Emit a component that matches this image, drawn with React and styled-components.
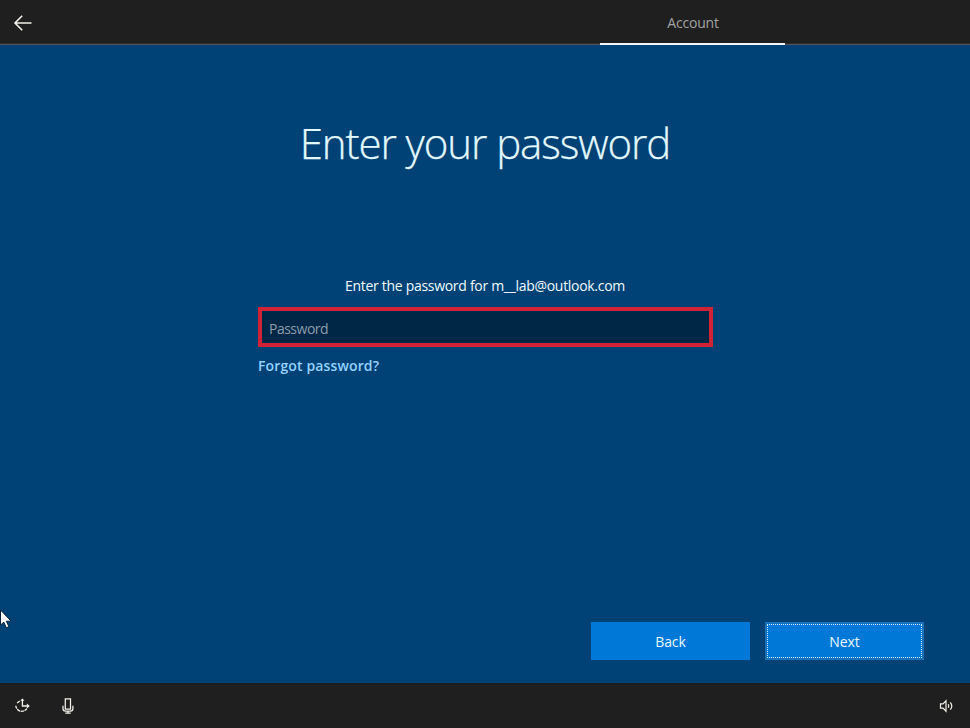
import React from "react";
import styled, { createGlobalStyle } from "styled-components";

const GlobalStyle = createGlobalStyle`
  * { box-sizing: border-box; }
  body {
    margin: 0;
    background: #004275;
    font-family: "Segoe UI", "Open Sans", "Noto Sans", sans-serif;
    overflow: hidden;
  }
`;

const Screen = styled.div`
  position: relative;
  display: flex;
  flex-direction: column;
  width: 970px;
  height: 728px;
  background: #004275;
  color: #fff;
`;

const TopBar = styled.header`
  display: flex;
  justify-content: space-between;
  height: 45px;
  padding: 0 185px 0 13px;
  background: linear-gradient(#1f1f1f 0 43px, #2b2c2c 43px 44px, #4a5a64 44px);
`;

const IconButton = styled.button`
  display: flex;
  align-items: center;
  padding: 0;
  border: 0;
  background: none;
  color: #f4f1ea;
`;

const Tab = styled.div`
  width: 185px;
  height: 45px;
  padding-left: 1px;
  border-bottom: 2px solid #f5f5f5;
  text-align: center;
  font-size: 14px;
  line-height: 46px;
  letter-spacing: -0.2px;
  color: #a3a3a3;
`;

const Main = styled.main`
  display: flex;
  flex-direction: column;
  flex: 1;
  padding: 68px 46px 23px 258px;
`;

const Title = styled.h1`
  width: 454px;
  height: 60px;
  margin: 0;
  text-align: center;
  white-space: nowrap;
  font-size: 42px;
  font-weight: 300;
  line-height: 60px;
  letter-spacing: -1.08px;
  color: #e2f8ff;
  -webkit-text-stroke: 0.25px #e2f8ff;
`;

const Form = styled.form`
  display: flex;
  flex-direction: column;
  align-items: flex-start;
  width: 455px;
  margin-top: 102px;
`;

const Prompt = styled.label`
  width: 454px;
  height: 32px;
  text-align: center;
  font-size: 14px;
  line-height: 22px;
  letter-spacing: -0.3px;
  color: #eefaff;
`;

const PasswordInput = styled.input`
  width: 455px;
  height: 40px;
  padding: 2px 7px 0;
  border: 4px solid #d02336;
  border-radius: 0;
  background: #002746;
  outline: 0;
  font: inherit;
  font-size: 14px;
  letter-spacing: -0.5px;
  &::placeholder { color: #8c9caa; opacity: 1; }
`;

const ForgotLink = styled.a`
  margin-top: 8px;
  font-size: 14px;
  font-weight: 600;
  line-height: 22px;
  letter-spacing: 0.13px;
  color: #93d2ff;
`;

const Actions = styled.div`
  display: flex;
  justify-content: flex-end;
  gap: 15px;
  margin-top: auto;
`;

const Button = styled.button`
  display: grid;
  width: 159px;
  height: 38px;
  padding: ${(p) => (p.$focused ? "2px" : "0")};
  border: 0;
  background: ${(p) => (p.$focused ? "#1672bd" : "#0078d7")};
  color: #e9faff;
  font: inherit;
  font-size: 14px;
  letter-spacing: -0.1px;
`;

const ButtonFace = styled.span`
  display: grid;
  place-items: center;
  border: ${(p) => (p.$focused ? "1px dotted #c9ecff" : "0")};
  background: #0078d7;
`;

const BottomBar = styled.footer`
  display: flex;
  align-items: center;
  height: 45px;
  padding: 1px 16px 0 14px;
  background: #1f1f1f;
  gap: 30px;
`;

const VolumeButton = styled(IconButton)`
  margin-left: auto;
`;

const Pointer = styled.svg`
  position: absolute;
  left: 0;
  top: 609px;
`;

const BackIcon = () => (
  <svg width="20" height="18" viewBox="0 0 20 18" fill="none" stroke="currentColor" strokeWidth="1.6">
    <path d="M18.5 9H2M9.2 1.7 2 9l7.2 7.3" />
  </svg>
);

const EaseIcon = () => (
  <svg width="17" height="18" viewBox="0 0 17 18" fill="none" stroke="currentColor" strokeWidth="1.3">
    <path d="M8.4 2v7H14" />
    <path d="m12.8 6.5 3 2.5-3 2.5z" fill="currentColor" stroke="none" />
    <path d="M5.8 4.1A5.8 5.8 0 0 0 3.2 6.2" />
    <path d="M1.8 8.7A6 6 0 0 0 13 11.3" strokeDasharray="3.2 .7" />
    <path d="m6.3 3.7 2.1-2.3 2.1 2.3z" fill="currentColor" stroke="none" />
  </svg>
);

const MicIcon = () => (
  <svg width="14" height="18" viewBox="0 0 14 18" fill="none" stroke="currentColor" strokeWidth="1.25">
    <path d="M4.3 1.8h5.2v10.4H4.3z" />
    <path d="M2 8.7v3.1q0 2.4 2.4 2.4h5.1q2.4 0 2.4-2.4V8.7M7 14.3v1.9M4.3 16.2h5.4" />
  </svg>
);

const VolumeIcon = () => (
  <svg width="15" height="14" viewBox="0 0 15 14" fill="none" stroke="currentColor" strokeWidth="1.2">
    <path d="M1.5 4.8H4l3-3v10.4l-3-3H1.5z" />
    <path d="M9.2 5.3q1 1.7 0 3.4M11.3 3.3q3 3.7 0 7.4" />
  </svg>
);

export default function App() {
  return (
    <>
      <GlobalStyle />
      <Screen>
        <TopBar>
          <IconButton aria-label="Go back"><BackIcon /></IconButton>
          <Tab>Account</Tab>
        </TopBar>
        <Main>
          <Title>Enter your password</Title>
          <Form>
            <Prompt htmlFor="password">Enter the password for m__lab@outlook.com</Prompt>
            <PasswordInput id="password" type="password" placeholder="Password" />
            <ForgotLink>Forgot password?</ForgotLink>
          </Form>
          <Actions>
            <Button><ButtonFace>Back</ButtonFace></Button>
            <Button $focused><ButtonFace $focused>Next</ButtonFace></Button>
          </Actions>
        </Main>
        <BottomBar>
          <IconButton aria-label="Ease of access"><EaseIcon /></IconButton>
          <IconButton aria-label="Microphone"><MicIcon /></IconButton>
          <VolumeButton aria-label="Volume"><VolumeIcon /></VolumeButton>
        </BottomBar>
        <Pointer width="12" height="20" viewBox="0 0 12 20">
          <path d="M.5 1v15.2l3.3-3 2.6 5.6 2.5-1.2-2.5-5.4h4.8z" fill="#fff" stroke="#092039" />
        </Pointer>
      </Screen>
    </>
  );
}
